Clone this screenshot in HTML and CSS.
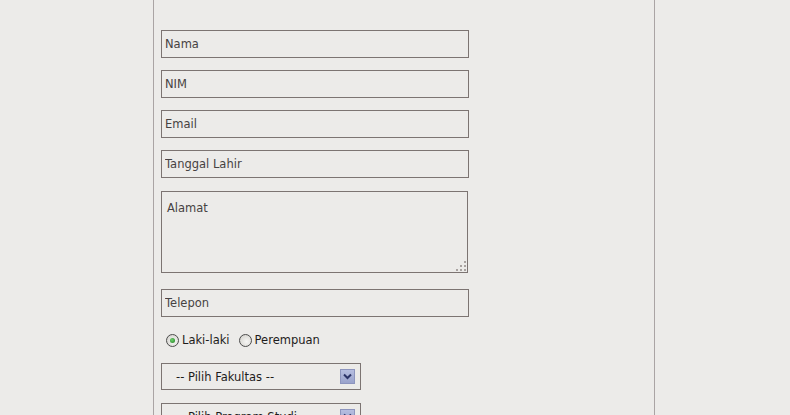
FILE: index.html
```html
<!DOCTYPE html>
<html>
<head>
<meta charset="utf-8">
<link rel="stylesheet" href="styles.css">
</head>
<body>
<div class="page">
  <form class="form">
    <input class="field" type="text" placeholder="Nama">
    <input class="field" type="text" placeholder="NIM">
    <input class="field" type="text" placeholder="Email">
    <input class="field" type="text" placeholder="Tanggal Lahir">
    <div class="area-wrap">
      <textarea class="area" placeholder="Alamat"></textarea>
      <svg class="grip" width="12" height="12" viewBox="0 0 12 12">
        <rect x="9" y="1" width="2" height="2" fill="#a8a2a0"/>
        <rect x="5" y="5" width="2" height="2" fill="#a8a2a0"/>
        <rect x="9" y="5" width="2" height="2" fill="#a8a2a0"/>
        <rect x="1" y="9" width="2" height="2" fill="#a8a2a0"/>
        <rect x="5" y="9" width="2" height="2" fill="#a8a2a0"/>
        <rect x="9" y="9" width="2" height="2" fill="#a8a2a0"/>
      </svg>
    </div>
    <input class="field phone" type="text" placeholder="Telepon">
    <div class="radios">
      <label class="radio"><span class="dot on"></span>Laki-laki</label>
      <label class="radio"><span class="dot"></span>Perempuan</label>
    </div>
    <div class="select">
      <span class="sel-text">-- Pilih Fakultas --</span>
      <span class="arrow"><svg width="9" height="7" viewBox="0 0 9 7"><path d="M1 1.5 L4.5 5 L8 1.5" fill="none" stroke="#2c3468" stroke-width="2"/></svg></span>
    </div>
    <div class="select">
      <span class="sel-text">-- Pilih Program Studi --</span>
      <span class="arrow"><svg width="9" height="7" viewBox="0 0 9 7"><path d="M1 1.5 L4.5 5 L8 1.5" fill="none" stroke="#2c3468" stroke-width="2"/></svg></span>
    </div>
  </form>
</div>
</body>
</html>
```
FILE: styles.css
```css
html, body {
  margin: 0;
  padding: 0;
  background: #ecebe9;
  height: 100%;
  overflow: hidden;
}
.page {
  margin-left: 153px;
  width: 502px;
  min-height: 100%;
  border-left: 1px solid #aaa4a4;
  border-right: 1px solid #aaa4a4;
  box-sizing: border-box;
  padding: 30px 0 0 7px;
  font-family: "DejaVu Sans", Verdana, sans-serif;
  font-size: 11.5px;
  color: #464242;
}
.form {
  display: flex;
  flex-direction: column;
  align-items: flex-start;
}
.field {
  width: 308px;
  height: 28px;
  box-sizing: border-box;
  border: 1px solid #7c7472;
  background: #ecebe9;
  margin: 0 0 12px 0;
  padding: 0 3px;
  font-family: inherit;
  font-size: 11.5px;
  color: #464242;
  outline: none;
}
.field::placeholder, .area::placeholder {
  color: #464242;
  opacity: 1;
}
.area-wrap {
  position: relative;
  margin-top: 1px;
  margin-bottom: 16px;
  height: 82px;
}
.area {
  display: block;
  width: 307px;
  height: 82px;
  box-sizing: border-box;
  border: 1px solid #7c7472;
  background: #ecebe9;
  padding: 9px 5px;
  font-family: inherit;
  font-size: 11.5px;
  color: #464242;
  resize: none;
  outline: none;
  margin: 0;
}
.grip {
  position: absolute;
  right: 1px;
  bottom: 1px;
}
.phone {
  margin-bottom: 13px;
}
.radios {
  display: flex;
  align-items: center;
  height: 20px;
  padding-left: 5px;
  margin-bottom: 13px;
  color: #1e1c1c;
}
.radio {
  display: flex;
  align-items: center;
  margin-right: 9px;
}
.dot {
  width: 11px;
  height: 11px;
  border: 1px solid #4c4c4c;
  border-radius: 50%;
  background: radial-gradient(circle at 60% 60%, #f6f6f4 0%, #d0cec9 100%);
  margin-right: 3px;
  position: relative;
  box-sizing: content-box;
}
.dot.on::after {
  content: "";
  position: absolute;
  left: 3px;
  top: 3px;
  width: 5px;
  height: 5px;
  border-radius: 50%;
  background: radial-gradient(circle at 40% 40%, #6ed46e, #1f7a1f);
}
.select {
  width: 200px;
  height: 27px;
  box-sizing: border-box;
  border: 1px solid #7c7472;
  display: flex;
  align-items: center;
  justify-content: space-between;
  padding: 0 5px 0 14px;
  margin-bottom: 13px;
  color: #1e1c1c;
}
.arrow {
  width: 15px;
  height: 15px;
  box-sizing: border-box;
  border: 1px solid #8d95be;
  background: linear-gradient(#b6bee0, #9aa3cc);
  display: flex;
  align-items: center;
  justify-content: center;
}
```
